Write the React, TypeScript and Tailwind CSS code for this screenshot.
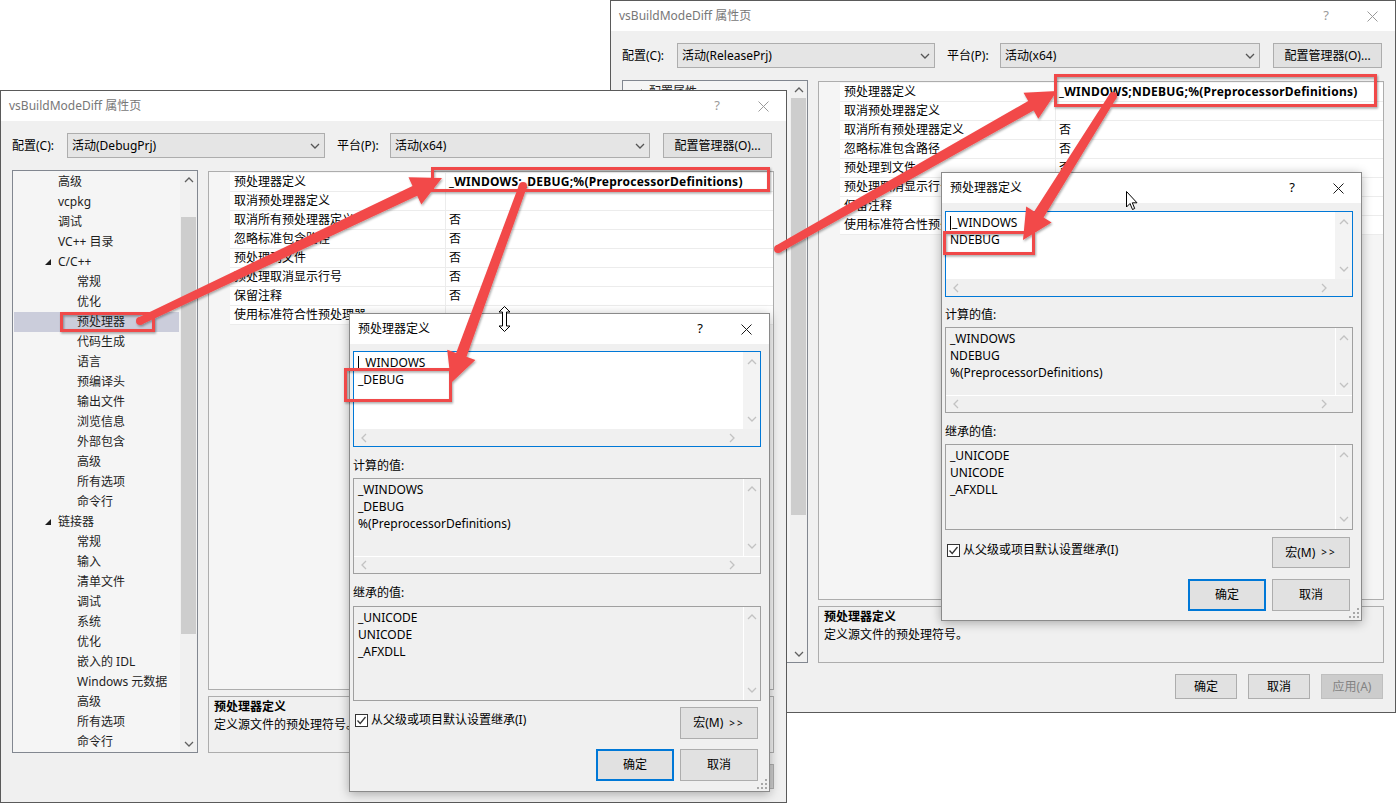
import React from 'react';

type TreeRow = { label: string; level: 0 | 1 | 2; expander?: boolean; selected?: boolean };
type GridRow = { label: string; value: string; bold?: boolean };

const indent = ['pl-[12px]', 'pl-[31px]', 'pl-[50px]'];

function Chevron({ dir, color = '#c2c2c2' }: { dir: 'up' | 'down' | 'left' | 'right'; color?: string }) {
  const vertical = dir === 'up' || dir === 'down';
  const pts = { up: '1,6 5,2 9,6', down: '1,2 5,6 9,2', left: '6,1 2,5 6,9', right: '2,1 6,5 2,9' }[dir];
  const w = vertical ? 10 : 8;
  const h = vertical ? 8 : 10;
  return (
    <svg width={w} height={h} viewBox={`0 0 ${w} ${h}`}>
      <polyline points={pts} fill="none" stroke={color} strokeWidth="1.3" />
    </svg>
  );
}

function Caption({ title, active }: { title: string; active?: boolean }) {
  const c = active ? '#1a1a1a' : '#9a9a9a';
  return (
    <div className="flex h-[30px] shrink-0 items-center bg-white">
      <span className={active ? 'pl-[8px] text-black' : 'pl-[8px] text-[#777777]'}>{title}</span>
      <div className="ml-auto flex h-full">
        <div className="flex w-[46px] items-center justify-center">
          <span className={active ? 'text-[13px] text-black' : 'text-[13px] text-[#9a9a9a]'}>?</span>
        </div>
        <div className="flex w-[46px] items-center justify-center">
          <svg width="11" height="11" viewBox="0 0 11 11">
            <path d="M0.5 0.5 L10.5 10.5 M10.5 0.5 L0.5 10.5" stroke={c} strokeWidth="1" />
          </svg>
        </div>
      </div>
    </div>
  );
}

function Btn({ className, children, primary, disabled }: { className: string; children: React.ReactNode; primary?: boolean; disabled?: boolean }) {
  const tone = primary
    ? 'border-2 border-[#0078d7] bg-[#e1e1e1]'
    : disabled
      ? 'border border-[#bfbfbf] bg-[#cccccc] text-[#838383]'
      : 'border border-[#adadad] bg-[#e1e1e1]';
  return <div className={`flex shrink-0 items-center justify-center ${tone} ${className}`}>{children}</div>;
}

function Combo({ w, text }: { w: string; text: string }) {
  return (
    <div className={`flex h-[25px] ${w} shrink-0 items-center justify-between border border-[#adadad] bg-[#e5e5e5] pl-[4px] pr-[4px]`}>
      <span>{text}</span>
      <Chevron dir="down" color="#555555" />
    </div>
  );
}

function Tree({ rows, thumbMt }: { rows: TreeRow[]; thumbMt: string }) {
  return (
    <div className="flex h-[583px] w-[186px] shrink-0 border border-[#828790] bg-[#f5f5f5]">
      <div className="flex flex-1 flex-col overflow-hidden px-[1px] pt-[1px]">
        {rows.map((r, i) => (
          <div
            key={i}
            className={`flex h-[20px] shrink-0 items-center ${indent[r.level]} ${r.selected ? 'bg-[#cbcddb]' : ''}`}
          >
            <span className="flex w-[13px] items-center">
              {r.expander && (
                <svg width="6" height="6" viewBox="0 0 6 6">
                  <polygon points="0,6 6,6 6,0" fill="#1e1e1e" />
                </svg>
              )}
            </span>
            <span className="whitespace-nowrap text-[#1e1e1e]">{r.label}</span>
          </div>
        ))}
      </div>
      <div className="flex w-[17px] flex-col bg-[#f0f0f0]">
        <div className="flex h-[17px] items-center justify-center">
          <Chevron dir="up" color="#606060" />
        </div>
        <div className={`${thumbMt} mx-[1px] h-[417px] bg-[#cdcdcd]`} />
        <div className="flex-1" />
        <div className="flex h-[17px] items-center justify-center">
          <Chevron dir="down" color="#606060" />
        </div>
      </div>
    </div>
  );
}

function Grid({ rows }: { rows: GridRow[] }) {
  return (
    <div className="flex h-[519px] flex-col border border-[#adadad] bg-[#f5f5f5] pt-[1px]">
      {rows.map((r, i) => (
        <div key={i} className="flex h-[19px] shrink-0">
          <div className="w-[21px] shrink-0" />
          <div className="flex w-[215px] shrink-0 items-center overflow-hidden whitespace-nowrap border-b border-[#ececec] bg-white pl-[4px]">
            {r.label}
          </div>
          <div
            className={`flex flex-1 items-center whitespace-nowrap border-b border-l border-[#ececec] bg-white pl-[3px] ${r.bold ? 'font-bold tracking-[0.25px]' : ''}`}
          >
            {r.value}
          </div>
        </div>
      ))}
    </div>
  );
}

function PropertyPage({
  pos,
  config,
  tree,
  rows,
  thumbMt,
  buttons,
}: {
  pos: string;
  config: string;
  tree: TreeRow[];
  rows: GridRow[];
  thumbMt: string;
  buttons?: boolean;
}) {
  return (
    <div className={`absolute ${pos} flex h-[713px] flex-col border border-[#5a5a5a] bg-[#f0f0f0]`}>
      <Caption title="vsBuildModeDiff 属性页" />
      <div className="mt-[12px] flex h-[25px] items-center pl-[11px]">
        <span className="w-[55px] shrink-0">配置(C):</span>
        <Combo w="w-[258px]" text={config} />
        <span className="ml-[12px] w-[53px] shrink-0">平台(P):</span>
        <Combo w="w-[260px]" text="活动(x64)" />
        <Btn className="ml-[13px] h-[25px] w-[109px]">配置管理器(O)...</Btn>
      </div>
      <div className="mt-[12px] flex h-[583px] gap-[10px] pl-[11px]">
        <Tree rows={tree} thumbMt={thumbMt} />
        <div className="flex w-[566px] shrink-0 flex-col pt-[1px]">
          <Grid rows={rows} />
          <div className="mt-[6px] h-[57px] border border-[#adadad] bg-[#f0f0f0] pl-[5px] pt-[1px] leading-[18px]">
            <div className="font-bold">预处理器定义</div>
            <div>定义源文件的预处理符号。</div>
          </div>
        </div>
      </div>
      <div className="mt-[11px] flex h-[25px] justify-end gap-[11px] pr-[12px]">
        {buttons && (
          <>
            <Btn className="h-[25px] w-[62px]">确定</Btn>
            <Btn className="h-[25px] w-[62px]">取消</Btn>
            <Btn className="h-[25px] w-[62px]" disabled>
              应用(A)
            </Btn>
          </>
        )}
        {!buttons && <div className="h-[25px] w-[62px] border border-[#adadad] bg-[#cccccc]" />}
      </div>
    </div>
  );
}

function ListBox({ lines, h, editable, hscroll, caret }: { lines: string[]; h: string; editable?: boolean; hscroll?: boolean; caret?: boolean }) {
  return (
    <div className={`flex ${h} w-[408px] shrink-0 flex-col border ${editable ? 'border-[#0078d7] bg-white' : 'border-[#a0a0a0] bg-[#f0f0f0]'}`}>
      <div className="flex min-h-0 flex-1">
        <div className="flex-1 pl-[4px] pt-[2px] leading-[17px]">
          {lines.map((l, i) => (
            <div key={i} className="flex items-center whitespace-nowrap">
              {caret && i === 0 && <span className="mr-[1px] inline-block h-[14px] w-[1px] bg-black" />}
              {l}
            </div>
          ))}
        </div>
        <div className={`flex w-[17px] flex-col items-center justify-between py-[6px] ${editable ? 'bg-[#f3f3f3]' : 'border-l border-white'}`}>
          <Chevron dir="up" />
          <Chevron dir="down" />
        </div>
      </div>
      {hscroll && (
        <div className={`flex h-[17px] shrink-0 items-center justify-between pl-[6px] pr-[24px] ${editable ? 'bg-[#f0f0f0]' : 'border-t border-white'}`}>
          <Chevron dir="left" />
          <Chevron dir="right" />
        </div>
      )}
    </div>
  );
}

type DlgCfg = {
  pos: string;
  topGap: string;
  editH: string;
  lab1: string;
  compH: string;
  lab2: string;
  inhH: string;
  rowMt: string;
  btnH: string;
  okMt: string;
  lines: string[];
  computed: string[];
};

function DefDialog({ cfg }: { cfg: DlgCfg }) {
  return (
    <div className={`absolute ${cfg.pos} flex w-[421px] flex-col border border-[#8a8a8a] bg-[#f0f0f0] shadow-[0_2px_10px_rgba(0,0,0,0.3)]`}>
      <Caption title="预处理器定义" active />
      <div className="flex flex-col pl-[3px]">
        <div className={cfg.topGap} />
        <ListBox lines={cfg.lines} h={cfg.editH} editable hscroll caret />
        <div className={`${cfg.lab1} leading-[14px]`}>计算的值:</div>
        <ListBox lines={cfg.computed} h={cfg.compH} hscroll />
        <div className={`${cfg.lab2} leading-[14px]`}>继承的值:</div>
        <ListBox lines={['_UNICODE', 'UNICODE', '_AFXDLL']} h={cfg.inhH} />
        <div className={`${cfg.rowMt} flex items-start justify-between pr-[11px]`}>
          <div className="ml-[2px] mt-[6px] flex items-center gap-[3px]">
            <div className="flex h-[13px] w-[13px] items-center justify-center border border-[#333333] bg-white">
              <svg width="11" height="11" viewBox="0 0 11 11">
                <polyline points="1.5,5.5 4.2,8.5 9.5,2" fill="none" stroke="#333333" strokeWidth="1.3" />
              </svg>
            </div>
            <span className="leading-[14px]">从父级或项目默认设置继承(I)</span>
          </div>
          <Btn className={`${cfg.btnH} w-[78px]`}>
            宏(M)
            <span className="ml-[6px] text-[10px] tracking-[2px]">&gt;&gt;</span>
          </Btn>
        </div>
        <div className={`${cfg.okMt} flex justify-end gap-[6px] pr-[11px]`}>
          <Btn className="h-[32px] w-[78px]" primary>
            确定
          </Btn>
          <Btn className="h-[32px] w-[78px]">取消</Btn>
        </div>
      </div>
      <svg width="12" height="12" viewBox="0 0 12 12" className="absolute bottom-[1px] right-[1px]">
        <g fill="#a8a8a8">
          <rect x="9" y="1" width="2" height="2" />
          <rect x="5" y="5" width="2" height="2" />
          <rect x="9" y="5" width="2" height="2" />
          <rect x="1" y="9" width="2" height="2" />
          <rect x="5" y="9" width="2" height="2" />
          <rect x="9" y="9" width="2" height="2" />
        </g>
      </svg>
    </div>
  );
}

function arrowPoints(tx: number, ty: number, px: number, py: number) {
  const dx = px - tx;
  const dy = py - ty;
  const L = Math.hypot(dx, dy);
  const ux = dx / L;
  const uy = dy / L;
  const nx = -uy;
  const ny = ux;
  const headL = 30;
  const headW = 30;
  const baseW = 11;
  const tailW = 8;
  const bx = px - ux * headL;
  const by = py - uy * headL;
  const p = (x: number, y: number) => `${x.toFixed(1)},${y.toFixed(1)}`;
  return [
    p(tx + (nx * tailW) / 2, ty + (ny * tailW) / 2),
    p(bx + (nx * baseW) / 2, by + (ny * baseW) / 2),
    p(bx + (nx * headW) / 2, by + (ny * headW) / 2),
    p(px, py),
    p(bx - (nx * headW) / 2, by - (ny * headW) / 2),
    p(bx - (nx * baseW) / 2, by - (ny * baseW) / 2),
    p(tx - (nx * tailW) / 2, ty - (ny * tailW) / 2),
  ].join(' ');
}

const boxes = [
  [60, 312, 95, 20],
  [431, 167, 339, 25],
  [344, 368, 108, 34],
  [1054, 74, 323, 33],
  [943, 231, 92, 24],
];

const arrows = [
  [140, 321, 442, 178],
  [523, 186, 451, 383],
  [778, 249, 1057, 91],
  [1113, 96, 1023, 240],
];

function Annotations() {
  return (
    <svg width="1396" height="803" viewBox="0 0 1396 803" className="pointer-events-none absolute left-0 top-0">
      <defs>
        <filter id="sh" x="-10%" y="-10%" width="120%" height="120%">
          <feDropShadow dx="1" dy="1.5" stdDeviation="1.2" floodColor="#000" floodOpacity="0.35" />
        </filter>
      </defs>
      <g filter="url(#sh)">
        {boxes.map(([x, y, w, h], i) => (
          <rect key={i} x={x + 1.5} y={y + 1.5} width={w - 3} height={h - 3} fill="none" stroke="#f04848" strokeWidth="3" />
        ))}
        {arrows.map(([tx, ty, px, py], i) => (
          <g key={i}>
            <circle cx={tx} cy={ty} r="4" fill="#f24a4a" />
            <polygon points={arrowPoints(tx, ty, px, py)} fill="#f24a4a" strokeLinejoin="round" />
          </g>
        ))}
      </g>
    </svg>
  );
}

const leftTree: TreeRow[] = [
  { label: '高级', level: 1 },
  { label: 'vcpkg', level: 1 },
  { label: '调试', level: 1 },
  { label: 'VC++ 目录', level: 1 },
  { label: 'C/C++', level: 1, expander: true },
  { label: '常规', level: 2 },
  { label: '优化', level: 2 },
  { label: '预处理器', level: 2, selected: true },
  { label: '代码生成', level: 2 },
  { label: '语言', level: 2 },
  { label: '预编译头', level: 2 },
  { label: '输出文件', level: 2 },
  { label: '浏览信息', level: 2 },
  { label: '外部包含', level: 2 },
  { label: '高级', level: 2 },
  { label: '所有选项', level: 2 },
  { label: '命令行', level: 2 },
  { label: '链接器', level: 1, expander: true },
  { label: '常规', level: 2 },
  { label: '输入', level: 2 },
  { label: '清单文件', level: 2 },
  { label: '调试', level: 2 },
  { label: '系统', level: 2 },
  { label: '优化', level: 2 },
  { label: '嵌入的 IDL', level: 2 },
  { label: 'Windows 元数据', level: 2 },
  { label: '高级', level: 2 },
  { label: '所有选项', level: 2 },
  { label: '命令行', level: 2 },
];

// only the first row of the back window's tree peeks out above the front window
const rightTree: TreeRow[] = [{ label: '配置属性', level: 0, expander: true }];

const gridRows = (value: string, hideLast?: boolean): GridRow[] => [
  { label: '预处理器定义', value, bold: true },
  { label: '取消预处理器定义', value: '' },
  { label: '取消所有预处理器定义', value: '否' },
  { label: '忽略标准包含路径', value: '否' },
  { label: '预处理到文件', value: '否' },
  { label: '预处理取消显示行号', value: hideLast ? '' : '否' },
  { label: '保留注释', value: hideLast ? '' : '否' },
  { label: '使用标准符合性预处理器', value: '' },
];

const leftDlg: DlgCfg = {
  pos: 'left-[349px] top-[313px] h-[479px]',
  topGap: 'h-[7px]',
  editH: 'h-[96px]',
  lab1: 'h-[31px] pt-[12px]',
  compH: 'h-[96px]',
  lab2: 'h-[32px] pt-[12px]',
  inhH: 'h-[95px]',
  rowMt: 'mt-[6px]',
  btnH: 'h-[32px]',
  okMt: 'mt-[10px]',
  lines: ['_WINDOWS', '_DEBUG'],
  computed: ['_WINDOWS', '_DEBUG', '%(PreprocessorDefinitions)'],
};

const rightDlg: DlgCfg = {
  pos: 'left-[941px] top-[172px] h-[449px]',
  topGap: 'h-[8px]',
  editH: 'h-[86px]',
  lab1: 'h-[30px] pt-[11px]',
  compH: 'h-[86px]',
  lab2: 'h-[31px] pt-[12px]',
  inhH: 'h-[86px]',
  rowMt: 'mt-[7px]',
  btnH: 'h-[31px]',
  okMt: 'mt-[11px]',
  lines: ['_WINDOWS', 'NDEBUG'],
  computed: ['_WINDOWS', 'NDEBUG', '%(PreprocessorDefinitions)'],
};

export default function App() {
  return (
    <div className="relative h-[803px] w-[1396px] overflow-hidden bg-white font-[family-name:'Noto_Sans','Noto_Sans_CJK_SC',sans-serif] text-[12px] text-black">
      <PropertyPage
        pos="left-[610px] top-[0px] w-[786px]"
        config="活动(ReleasePrj)"
        tree={rightTree}
        rows={gridRows('_WINDOWS;NDEBUG;%(PreprocessorDefinitions)', true)}
        thumbMt="mt-[0px]"
        buttons
      />
      <DefDialog cfg={rightDlg} />
      <PropertyPage
        pos="left-[0px] top-[90px] w-[787px]"
        config="活动(DebugPrj)"
        tree={leftTree}
        rows={gridRows('_WINDOWS;_DEBUG;%(PreprocessorDefinitions)')}
        thumbMt="mt-[29px]"
      />
      <DefDialog cfg={leftDlg} />
      <Annotations />
      {/* resize cursor */}
      <svg width="13" height="26" viewBox="0 0 13 26" className="pointer-events-none absolute left-[498px] top-[306px]">
        <path d="M6.5 0.5 L12 6 L8.5 6 L8.5 20 L12 20 L6.5 25.5 L1 20 L4.5 20 L4.5 6 L1 6 Z" fill="white" stroke="black" />
      </svg>
      {/* pointer cursor */}
      <svg width="13" height="20" viewBox="0 0 13 20" className="pointer-events-none absolute left-[1126px] top-[191px]">
        <path d="M0.5 0.5 L0.5 16 L4 12.5 L6.5 18.5 L8.7 17.5 L6.3 11.8 L11 11.8 Z" fill="white" stroke="black" />
      </svg>
    </div>
  );
}
